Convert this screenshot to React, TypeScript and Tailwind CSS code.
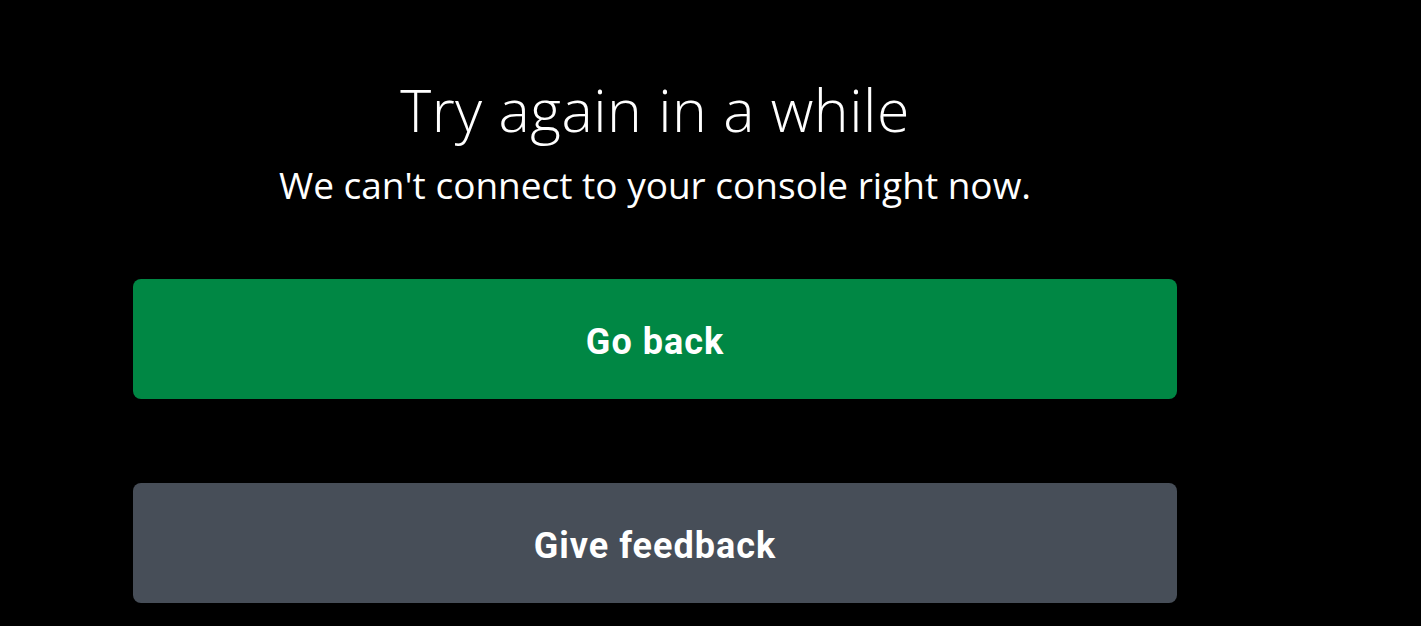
export default function App() {
  return (
    <div className="min-h-[626px] w-full bg-black pl-[133px] pt-[71px] font-['Open_Sans',sans-serif] text-white">
      <div className="flex w-[1044px] flex-col items-center">
        <h1 className="text-[59px] font-light leading-[76px] tracking-[0.5px]">Try again in a while</h1>
        <p className="mt-[14px] text-[37px] font-normal leading-[48px]">We can't connect to your console right now.</p>
        <button className="mt-[70px] flex h-[120px] w-full items-center justify-center rounded-[8px] bg-[#008744] pt-[6px] font-['Roboto',sans-serif] text-[36px] font-bold tracking-[1px]">
          Go back
        </button>
        <button className="mt-[84px] flex h-[120px] w-full items-center justify-center rounded-[8px] bg-[#474e58] pt-[6px] font-['Roboto',sans-serif] text-[36px] font-bold tracking-[1px]">
          Give feedback
        </button>
      </div>
    </div>
  );
}
